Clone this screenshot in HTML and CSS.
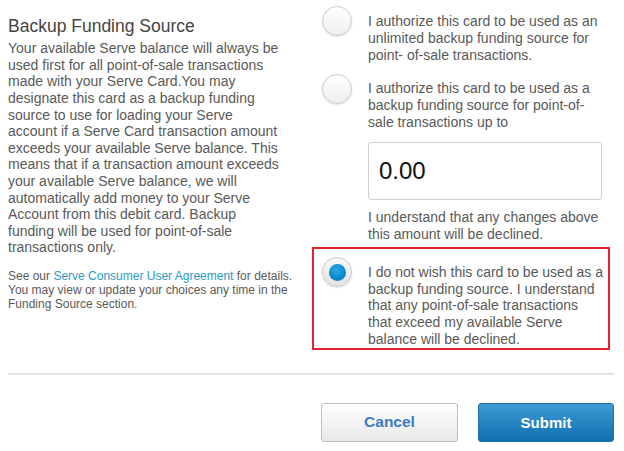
FILE: index.html
```html
<!DOCTYPE html>
<html>
<head>
<meta charset="utf-8">
<link rel="stylesheet" href="styles.css">
</head>
<body>
<div class="page">
  <div class="top">
    <div class="left">
      <h2 class="title">Backup Funding Source</h2>
      <p class="body-text">Your available Serve balance will always be used first for all point-of-sale transactions made with your Serve Card.You may designate this card as a backup funding source to use for loading your Serve account if a Serve Card transaction amount exceeds your available Serve balance. This means that if a transaction amount exceeds your available Serve balance, we will automatically add money to your Serve Account from this debit card. Backup funding will be used for point-of-sale transactions only.</p>
      <p class="small-text">See our <a class="link" href="#">Serve Consumer User Agreement</a> for details. You may view or update your choices any time in the Funding Source section.</p>
    </div>
    <div class="right">
      <div class="option">
        <span class="radio"></span>
        <div class="opt-body">
          <div class="opt-text">I authorize this card to be used as an unlimited backup funding source for point- of-sale transactions.</div>
        </div>
      </div>
      <div class="option">
        <span class="radio"></span>
        <div class="opt-body">
          <div class="opt-text">I authorize this card to be used as a backup funding source for point-of-sale transactions up to</div>
          <div class="amount">0.00</div>
          <div class="opt-note">I understand that any changes above this amount will be declined.</div>
        </div>
      </div>
      <div class="option selected">
        <span class="radio checked"><span class="dot"></span></span>
        <div class="opt-body">
          <div class="opt-text">I do not wish this card to be used as a backup funding source. I understand that any point-of-sale transactions that exceed my available Serve balance will be declined.</div>
        </div>
      </div>
    </div>
  </div>
  <div class="divider"></div>
  <div class="actions">
    <button class="btn btn-cancel">Cancel</button>
    <button class="btn btn-submit">Submit</button>
  </div>
</div>
</body>
</html>
```
FILE: styles.css
```css
html, body {
  margin: 0;
  padding: 0;
  background: #ffffff;
}
body {
  font-family: "Liberation Sans", Arial, sans-serif;
  color: #555555;
}
.page {
  width: 624px;
  height: 451px;
  padding: 0 10px 0 8px;
  box-sizing: border-box;
}
.top {
  display: flex;
  justify-content: space-between;
}
.left {
  width: 290px;
}
.title {
  margin: 14.5px 0 3.7px;
  font-size: 17.5px;
  line-height: 22px;
  font-weight: normal;
  color: #444444;
}
.body-text {
  margin: 0;
  width: 274px;
  font-size: 14px;
  line-height: 16.6px;
  color: #595959;
}
.small-text {
  margin: 13px 0 0;
  font-size: 12px;
  line-height: 14px;
  color: #595959;
}
.link {
  color: #2a9cc4;
  text-decoration: none;
}
.right {
  width: 298px;
  margin-right: 4px;
  display: flex;
  flex-direction: column;
}
.option {
  display: flex;
  gap: 16px;
  padding: 6px 4px 4px 10px;
}
.option.selected {
  border: 2px solid #e8202c;
  padding: 8px 4px 0 8px;
}
.radio {
  flex: none;
  width: 30px;
  height: 30px;
  box-sizing: border-box;
  border-radius: 50%;
  border: 1px solid #cbcbcb;
  background: linear-gradient(#ffffff, #efefef);
  box-shadow: 0 1px 2px rgba(0,0,0,0.12);
  display: flex;
  align-items: center;
  justify-content: center;
}
.radio.checked {
  background: linear-gradient(#fafafa, #e2e2e2);
}
.dot {
  width: 17px;
  height: 17px;
  border-radius: 50%;
  background: radial-gradient(circle at 45% 35%, #2aa9e6, #0b88c9 60%, #0a6fa8);
}
.opt-body {
  flex: 1;
  margin-top: 6.7px;
}
.opt-text, .opt-note {
  font-size: 14px;
  line-height: 17px;
  color: #595959;
}
.selected .opt-text {
  line-height: 16.7px;
}
.amount {
  margin-top: 10.3px;
  width: 234px;
  height: 58px;
  box-sizing: border-box;
  border: 1px solid #d0d0d0;
  border-radius: 3px;
  padding: 0 10px;
  font-size: 24px;
  line-height: 56px;
  color: #111111;
}
.opt-note {
  margin-top: 9.7px;
}
.divider {
  margin-top: 23px;
  height: 1px;
  background: #dcdcdc;
  border-bottom: 1px solid #ededed;
}
.actions {
  display: flex;
  justify-content: flex-end;
  gap: 20px;
  margin-top: 28px;
}
.btn {
  height: 39px;
  border-radius: 3px;
  font-family: "Liberation Sans", Arial, sans-serif;
  font-weight: bold;
  cursor: pointer;
}
.btn-cancel {
  width: 137px;
  font-size: 15.5px;
  border: 1px solid #bdbdbd;
  background: linear-gradient(#ffffff, #e8e8e8);
  color: #3b7cc2;
}
.btn-submit {
  width: 136px;
  font-size: 15px;
  border: 1px solid #1a72b0;
  background: linear-gradient(#3e9bd4, #0f6fb0);
  color: #ffffff;
}
```
